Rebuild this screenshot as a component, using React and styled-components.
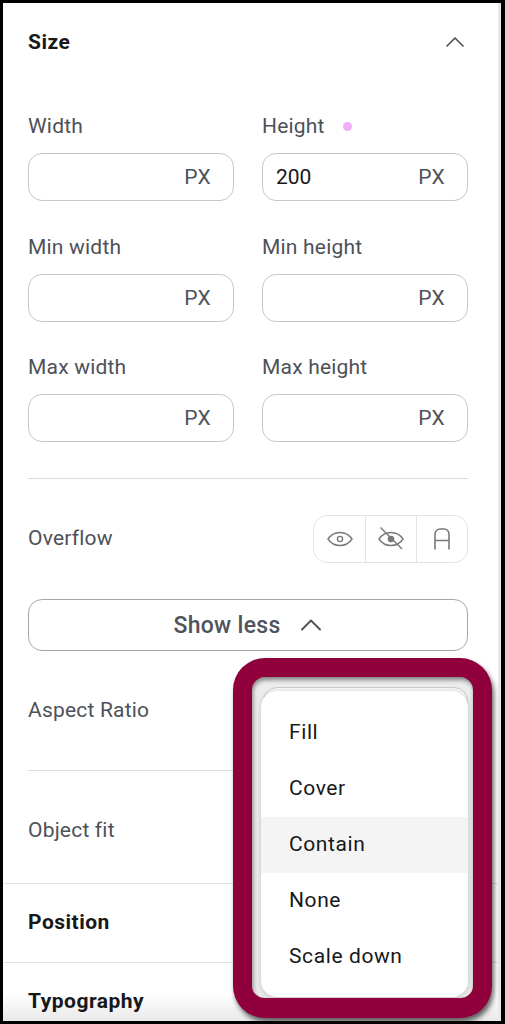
import React from 'react';
import styled, { createGlobalStyle } from 'styled-components';
import { ChevronUp } from 'lucide-react';

const Global = createGlobalStyle`
  html, body { margin: 0; padding: 0; background: #000; }
  body { font-family: Roboto, "Liberation Sans", sans-serif; -webkit-font-smoothing: antialiased; }
`;

const Frame = styled.div`
  position: relative;
  width: 505px;
  height: 1024px;
  box-sizing: border-box;
  padding: 3px 4px 3px 3px;
  background: #000;
  overflow: hidden;
`;

const Panel = styled.div`
  height: 100%;
  box-sizing: border-box;
  background: #fff;
  border-right: 3px solid #e9e9ea;
  overflow: hidden;
`;

const Section = styled.section`
  padding: ${p => p.$padding};
  border-bottom: ${p => (p.$last ? 'none' : '1px solid #e2e3e5')};
  background: ${p => (p.$last ? 'linear-gradient(#fff 0, #fff 30px, #e6e6e6 62px)' : 'transparent')};
  height: ${p => (p.$last ? '100%' : 'auto')};
`;

const TitleRow = styled.div`
  display: flex;
  align-items: center;
  justify-content: space-between;
  height: 24px;
  padding-right: 27px;
`;

const Title = styled.h3`
  margin: 0;
  font-size: 21px;
  line-height: 24px;
  font-weight: 700;
  letter-spacing: 0.5px;
  color: #17181a;
`;

const FieldGrid = styled.div`
  display: grid;
  grid-template-columns: 206px 206px;
  column-gap: 28px;
  row-gap: 34.5px;
  margin-top: 61px;
`;

const Field = styled.div`
  display: flex;
  flex-direction: column;
  gap: 14px;
`;

const Label = styled.label`
  display: flex;
  align-items: center;
  gap: 18px;
  height: 24px;
  padding-bottom: 2px;
  box-sizing: border-box;
  font-size: 21px;
  line-height: 22px;
  letter-spacing: 0.2px;
  color: #4d5158;
`;

const Dot = styled.span`
  width: 9px;
  height: 9px;
  border-radius: 50%;
  background: #f0aef8;
`;

const InputBox = styled.div`
  display: flex;
  align-items: center;
  justify-content: space-between;
  height: 48px;
  box-sizing: border-box;
  padding: 0 22px 0 13px;
  border: 1.5px solid #c6c7c9;
  border-radius: 14px;
  font-size: 21px;
  color: #17181a;
`;

const Unit = styled.span`
  margin-left: auto;
  color: #4f535a;
  letter-spacing: 0.3px;
`;

const Divider = styled.div`
  width: 440px;
  height: 1px;
  margin-top: ${p => p.$top}px;
  background: #dcdde0;
`;

const Row = styled.div`
  display: flex;
  align-items: center;
  justify-content: space-between;
  width: 440px;
  margin-top: ${p => p.$top || 0}px;
`;

const ToggleGroup = styled.div`
  display: flex;
  height: 48px;
  box-sizing: border-box;
  border: 1px solid #e2e3e5;
  border-radius: 14px;
`;

const Toggle = styled.button`
  display: flex;
  align-items: center;
  justify-content: center;
  width: 51px;
  padding: 0;
  background: none;
  border: none;
  border-left: ${p => (p.$first ? 'none' : '1px solid #e2e3e5')};
  color: #77797d;
`;

const ShowLess = styled.button`
  display: flex;
  align-items: center;
  justify-content: center;
  gap: 12px;
  width: 440px;
  height: 52px;
  margin-top: 36px;
  padding: 0 0 0 6px;
  box-sizing: border-box;
  background: #fff;
  border: 1.5px solid #a3a7ad;
  border-radius: 14px;
  font-family: inherit;
  font-size: 23px;
  font-weight: 500;
  letter-spacing: 0.3px;
  color: #4f535a;
`;

const Callout = styled.div`
  position: absolute;
  left: 233px;
  top: 658px;
  width: 259px;
  height: 360px;
  box-sizing: border-box;
  border: 19px solid #90003c;
  border-bottom-width: 20px;
  border-radius: 32px;
  background: #ececec;
  box-shadow: 2px 4px 5px rgba(0, 0, 0, 0.6);
`;

const InnerClip = styled.div`
  position: relative;
  height: 100%;
  border-radius: 12px;
  overflow: hidden;
  &::after {
    content: '';
    position: absolute;
    inset: 0;
    border-radius: 12px;
    box-shadow: inset 1px 3px 4px rgba(0, 0, 0, 0.45);
    pointer-events: none;
  }
`;

const SelectEdge = styled.div`
  position: absolute;
  left: 11px;
  top: 10px;
  width: 205px;
  height: 40px;
  box-sizing: border-box;
  border: 1.5px solid #c9cacc;
  border-radius: 14px;
  background: #f4f4f4;
`;

const Menu = styled.ul`
  position: absolute;
  left: 9px;
  top: 14px;
  width: 207px;
  height: 306px;
  margin: 0;
  padding: 14px 0 0;
  list-style: none;
  box-sizing: border-box;
  background: #fff;
  border-radius: 16px;
  box-shadow: 0 1px 5px rgba(0, 0, 0, 0.18);
`;

const MenuItem = styled.li`
  display: flex;
  align-items: center;
  height: 56px;
  padding: 0 0 2px 28px;
  box-sizing: border-box;
  font-size: 21px;
  letter-spacing: 0.6px;
  color: #17181a;
  background: ${p => (p.$active ? '#f4f4f4' : 'transparent')};
`;

const sizes = ['Width', 'Height', 'Min width', 'Min height', 'Max width', 'Max height'];

const fits = ['Fill', 'Cover', 'Contain', 'None', 'Scale down'];

const eyePath = 'M1 13C4 8.5 8 6.5 13 6.5S22 8.5 25 13C22 17.5 18 19.5 13 19.5S4 17.5 1 13Z';

const Eye = () => (
  <svg width="26" height="26" viewBox="0 0 26 26" fill="none" stroke="currentColor" strokeWidth="1.4">
    <path d={eyePath} />
    <circle cx="13" cy="13" r="2.6" />
  </svg>
);

const EyeOff = () => (
  <svg width="26" height="26" viewBox="0 0 26 26" fill="none" stroke="currentColor" strokeWidth="1.4">
    <path d={eyePath} />
    <circle cx="13" cy="13" r="2.6" fill="currentColor" />
    <path d="M2.5 1.5L24 23" />
  </svg>
);

const AutoIcon = () => (
  <svg width="16" height="22" viewBox="0 0 16 22" fill="none" stroke="currentColor" strokeWidth="1.6">
    <path d="M1 21.5V6a5 5 0 0 1 5-5h4a5 5 0 0 1 5 5v15.5M1 12.5h14" />
  </svg>
);

export default function App() {
  return (
    <Frame>
      <Global />
      <Panel>
        <Section $padding="27px 0 40px 25px">
          <TitleRow>
            <Title>Size</Title>
            <ChevronUp size={32} strokeWidth={1.3} color="#4f535a" />
          </TitleRow>
          <FieldGrid>
            {sizes.map(name => (
              <Field key={name}>
                <Label>
                  {name}
                  {name === 'Height' && <Dot />}
                </Label>
                <InputBox>
                  {name === 'Height' && '200'}
                  <Unit>PX</Unit>
                </InputBox>
              </Field>
            ))}
          </FieldGrid>
          <Divider $top={36} />
          <Row $top={36}>
            <Label as="span">Overflow</Label>
            <ToggleGroup>
              <Toggle $first><Eye /></Toggle>
              <Toggle><EyeOff /></Toggle>
              <Toggle><AutoIcon /></Toggle>
            </ToggleGroup>
          </Row>
          <ShowLess>
            Show less
            <ChevronUp size={36} strokeWidth={1.3} />
          </ShowLess>
          <Row $top={48}>
            <Label as="span">Aspect Ratio</Label>
          </Row>
          <Divider $top={47} />
          <Row $top={48}>
            <Label as="span">Object fit</Label>
          </Row>
        </Section>
        <Section $padding="26px 0 28px 25px">
          <Title>Position</Title>
        </Section>
        <Section $padding="26px 0 0 25px" $last>
          <Title>Typography</Title>
        </Section>
      </Panel>
      <Callout>
        <InnerClip>
          <SelectEdge />
          <Menu>
            {fits.map(fit => (
              <MenuItem key={fit} $active={fit === 'Contain'}>{fit}</MenuItem>
            ))}
          </Menu>
        </InnerClip>
      </Callout>
    </Frame>
  );
}
